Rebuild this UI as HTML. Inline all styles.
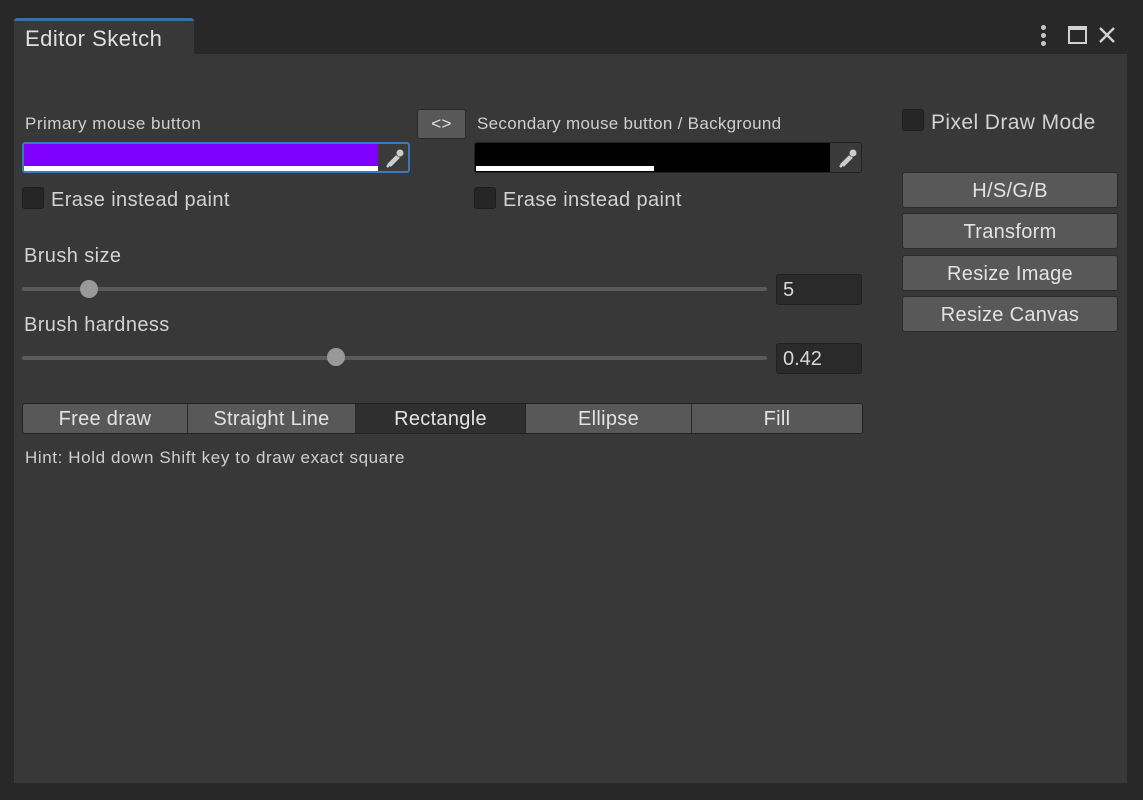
<!DOCTYPE html>
<html><head><style>
*{box-sizing:border-box;margin:0;padding:0}
body{width:1143px;height:800px;background:#282828;position:relative;overflow:hidden;font-family:"Liberation Sans",sans-serif;color:#d2d2d2}
.a{position:absolute}
.panel{left:14px;top:54px;width:1113px;height:729px;background:#383838}
.tab{left:14px;top:18px;width:180px;height:37px;background:#383838;border-top:3px solid #3a6ea5;border-radius:3px 3px 0 0;font-size:22px;letter-spacing:0.5px;padding:5px 0 0 11px;color:#e0e0e0}
.lbl{font-size:17px;letter-spacing:0.5px;color:#cfcfcf}
.big{font-size:20px;letter-spacing:0.4px;color:#d2d2d2}
.cb{width:22px;height:22px;background:#262626;border:1px solid #1e1e1e;border-radius:3px}
.btn{background:#585858;border:1px solid #2a2a2a;border-radius:3px;color:#e2e2e2;font-size:20px;letter-spacing:0.3px;text-align:center}
.track{height:4px;background:#5a5a5a;border-radius:2px}
.thumb{width:18px;height:18px;border-radius:50%;background:#999}
.num{background:#2a2a2a;border:1px solid #202020;border-radius:3px;font-size:20px;padding:4px 0 0 6px;color:#d8d8d8}
.seg div{line-height:31px}
</style></head><body>
<div class="a panel"></div>
<div class="a tab">Editor Sketch</div>
<div class="a" style="left:1041px;top:25px;width:5px;height:5px;border-radius:50%;background:#c8c8c8"></div>
<div class="a" style="left:1041px;top:33px;width:5px;height:5px;border-radius:50%;background:#c8c8c8"></div>
<div class="a" style="left:1041px;top:41px;width:5px;height:5px;border-radius:50%;background:#c8c8c8"></div>
<div class="a" style="left:1068px;top:26px;width:19px;height:18px;border:2px solid #d0d0d0;border-top-width:4px"></div>
<svg class="a" style="left:1098px;top:26px" width="18" height="18"><path d="M2 2L16 16M16 2L2 16" stroke="#d0d0d0" stroke-width="2.4"/></svg>

<div class="a lbl" style="left:25px;top:114px">Primary mouse button</div>
<div class="a btn" style="left:417px;top:109px;width:49px;height:30px;font-size:17px;line-height:28px">&lt;&gt;</div>
<div class="a lbl" style="left:477px;top:114px;letter-spacing:0.3px">Secondary mouse button / Background</div>

<div class="a" style="left:22px;top:142px;width:388px;height:31px;border:2px solid #3a79bb;border-radius:3px;background:#3a3a3a;overflow:hidden">
 <div class="a" style="left:0;top:0;width:354px;height:22px;background:#8000ff"></div>
 <div class="a" style="left:0;top:22px;width:354px;height:5px;background:#fff"></div>
 <svg class="a" style="left:360px;top:3px" width="22" height="22"><path d="M4 18L13 9M6 19L15 10M3 20L5 18" stroke="#ccc" stroke-width="2.5"/><circle cx="16" cy="6" r="3.5" fill="#ccc"/></svg>
</div>
<div class="a" style="left:474px;top:142px;width:388px;height:31px;border:1px solid #222;border-radius:3px;background:#3a3a3a;overflow:hidden">
 <div class="a" style="left:0;top:0;width:355px;height:29px;background:#000"></div>
 <div class="a" style="left:1px;top:23px;width:178px;height:5px;background:#fff"></div>
 <svg class="a" style="left:362px;top:4px" width="22" height="22"><path d="M4 18L13 9M6 19L15 10M3 20L5 18" stroke="#ccc" stroke-width="2.5"/><circle cx="16" cy="6" r="3.5" fill="#ccc"/></svg>
</div>

<div class="a cb" style="left:22px;top:187px"></div>
<div class="a big" style="left:51px;top:189px">Erase instead paint</div>
<div class="a cb" style="left:474px;top:187px"></div>
<div class="a big" style="left:503px;top:189px">Erase instead paint</div>

<div class="a cb" style="left:902px;top:109px"></div>
<div class="a big" style="left:931px;top:111px;font-size:21px">Pixel Draw Mode</div>

<div class="a btn" style="left:902px;top:172px;width:216px;height:36px;line-height:36px">H/S/G/B</div>
<div class="a btn" style="left:902px;top:213px;width:216px;height:36px;line-height:36px">Transform</div>
<div class="a btn" style="left:902px;top:255px;width:216px;height:36px;line-height:36px">Resize Image</div>
<div class="a btn" style="left:902px;top:296px;width:216px;height:36px;line-height:36px">Resize Canvas</div>

<div class="a big" style="left:24px;top:245px">Brush size</div>
<div class="a track" style="left:22px;top:287px;width:745px"></div>
<div class="a thumb" style="left:80px;top:280px"></div>
<div class="a num" style="left:776px;top:274px;width:86px;height:31px">5</div>

<div class="a big" style="left:24px;top:314px">Brush hardness</div>
<div class="a track" style="left:22px;top:356px;width:745px"></div>
<div class="a thumb" style="left:327px;top:348px"></div>
<div class="a num" style="left:776px;top:343px;width:86px;height:31px">0.42</div>

<div class="a seg" style="left:22px;top:403px;width:841px;height:31px;display:flex;border:1px solid #222;border-radius:3px;overflow:hidden;font-size:20px;letter-spacing:0.3px;color:#e2e2e2">
 <div style="width:165px;background:#585858;border-right:1px solid #2a2a2a;text-align:center">Free draw</div>
 <div style="width:168px;background:#585858;border-right:1px solid #2a2a2a;text-align:center">Straight Line</div>
 <div style="width:170px;background:#2f2f2f;border-right:1px solid #222;text-align:center">Rectangle</div>
 <div style="width:166px;background:#585858;border-right:1px solid #2a2a2a;text-align:center">Ellipse</div>
 <div style="flex:1;background:#585858;text-align:center">Fill</div>
</div>
<div class="a lbl" style="left:25px;top:448px;letter-spacing:0.6px">Hint: Hold down Shift key to draw exact square</div>
</body></html>
